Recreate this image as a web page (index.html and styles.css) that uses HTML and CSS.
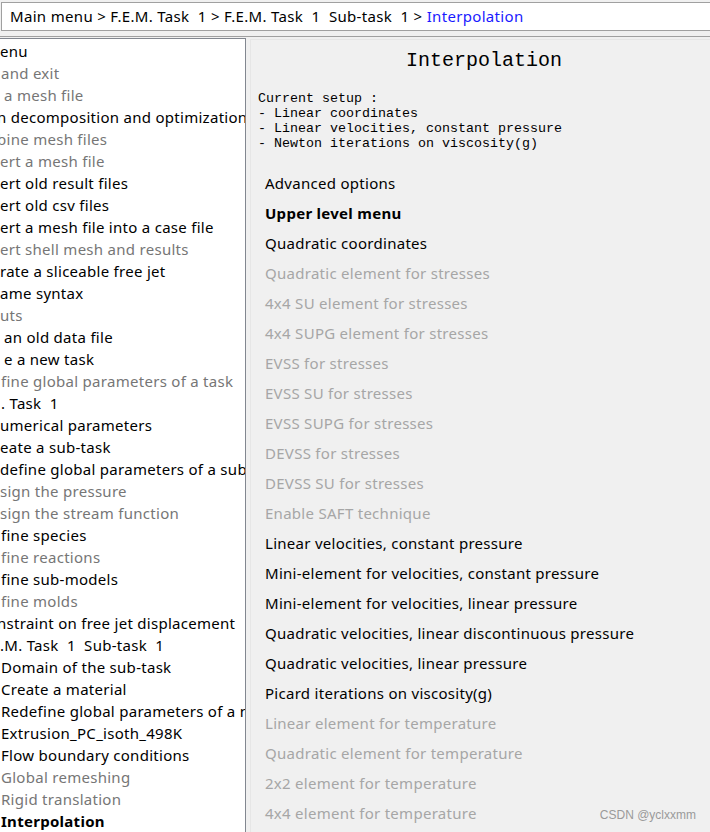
FILE: index.html
```html
<!DOCTYPE html>
<html>
<head>
<meta charset="utf-8">
<link rel="stylesheet" href="styles.css">
</head>
<body>
<div class="crumb">Main menu &gt; F.E.M. Task&nbsp;&nbsp;1 &gt; F.E.M. Task&nbsp;&nbsp;1&nbsp;&nbsp;Sub-task&nbsp;&nbsp;1 &gt; <span class="here">Interpolation</span></div>
<div class="sep"></div>
<div class="main">
  <div class="tree">
    <div class="row">enu</div>
    <div class="row off i1">and exit</div>
    <div class="row off i4">a mesh file</div>
    <div class="row cut">n decomposition and optimization</div>
    <div class="row off cut">bine mesh files</div>
    <div class="row off">ert a mesh file</div>
    <div class="row">ert old result files</div>
    <div class="row">ert old csv files</div>
    <div class="row">ert a mesh file into a case file</div>
    <div class="row off">ert shell mesh and results</div>
    <div class="row">rate a sliceable free jet</div>
    <div class="row">ame syntax</div>
    <div class="row off">uts</div>
    <div class="row i4">an old data file</div>
    <div class="row i4">e a new task</div>
    <div class="row off i1">fine global parameters of a task</div>
    <div class="row i1">. Task&nbsp;&nbsp;1</div>
    <div class="row">umerical parameters</div>
    <div class="row">eate a sub-task</div>
    <div class="row">define global parameters of a sub-task</div>
    <div class="row off">sign the pressure</div>
    <div class="row off">sign the stream function</div>
    <div class="row i1">fine species</div>
    <div class="row off i1">fine reactions</div>
    <div class="row i1">fine sub-models</div>
    <div class="row off i1">fine molds</div>
    <div class="row cut">nstraint on free jet displacement</div>
    <div class="row">.M. Task&nbsp;&nbsp;1&nbsp;&nbsp;Sub-task&nbsp;&nbsp;1</div>
    <div class="row i1">Domain of the sub-task</div>
    <div class="row i1">Create a material</div>
    <div class="row i1">Redefine global parameters of a material</div>
    <div class="row i1">Extrusion_PC_isoth_498K</div>
    <div class="row i1">Flow boundary conditions</div>
    <div class="row off i1">Global remeshing</div>
    <div class="row off i1">Rigid translation</div>
    <div class="row i1 cur">Interpolation</div>
  </div>
  <div class="panel">
    <div class="title">Interpolation</div>
    <pre class="setup">Current setup :
- Linear coordinates
- Linear velocities, constant pressure
- Newton iterations on viscosity(g)</pre>
    <div class="menu">
      <div class="item">Advanced options</div>
      <div class="item bold">Upper level menu</div>
      <div class="item">Quadratic coordinates</div>
      <div class="item dis">Quadratic element for stresses</div>
      <div class="item dis">4x4 SU element for stresses</div>
      <div class="item dis">4x4 SUPG element for stresses</div>
      <div class="item dis">EVSS for stresses</div>
      <div class="item dis">EVSS SU for stresses</div>
      <div class="item dis">EVSS SUPG for stresses</div>
      <div class="item dis">DEVSS for stresses</div>
      <div class="item dis">DEVSS SU for stresses</div>
      <div class="item dis">Enable SAFT technique</div>
      <div class="item">Linear velocities, constant pressure</div>
      <div class="item">Mini-element for velocities, constant pressure</div>
      <div class="item">Mini-element for velocities, linear pressure</div>
      <div class="item">Quadratic velocities, linear discontinuous pressure</div>
      <div class="item">Quadratic velocities, linear pressure</div>
      <div class="item">Picard iterations on viscosity(g)</div>
      <div class="item dis">Linear element for temperature</div>
      <div class="item dis">Quadratic element for temperature</div>
      <div class="item dis">2x2 element for temperature</div>
      <div class="item dis">4x4 element for temperature</div>
    </div>
    <div class="mark">CSDN @yclxxmm</div>
  </div>
</div>
</body>
</html>
```

FILE: styles.css
```css
html, body {
  margin: 0;
  padding: 0;
  height: 100%;
  overflow: hidden;
}
body {
  background: #f0f0f0;
  font-family: "Noto Sans", "Open Sans", sans-serif;
  font-size: 15px;
  letter-spacing: 0.28px;
  color: #000;
  display: flex;
  flex-direction: column;
}
.crumb {
  margin: 2px 0 0 1px;
  height: 27px;
  line-height: 27px;
  border: 1px solid #a0a0a0;
  border-right: none;
  background: #fff;
  padding-left: 8px;
  letter-spacing: 0.32px;
  white-space: nowrap;
  overflow: hidden;
}
.here { color: #1a1aff; }
.sep {
  margin-top: 5px;
  border-top: 1px solid #a0a0a0;
}
.main {
  flex: 1;
  display: flex;
  gap: 4px;
  margin-top: 1px;
  min-height: 0;
}
.tree {
  width: 245px;
  flex: none;
  background: #fff;
  border-top: 1px solid #828790;
  border-right: 1px solid #828790;
  padding-top: 1px;
  overflow: hidden;
}
.row {
  height: 22px;
  line-height: 22px;
  white-space: nowrap;
}
.row.off { color: #767676; }
.row.i1 { padding-left: 1px; }
.row.i4 { padding-left: 4px; }
.row.cut { margin-left: -3px; }
.row.cur { font-weight: bold; }
.panel {
  flex: 1;
  position: relative;
  margin-top: 1px;
  border-top: 1px solid #e6e6e6;
  border-left: 1px solid #e6e6e6;
  background: #f0f0f0;
  padding-left: 7px;
  overflow: hidden;
}
.title {
  font-family: "Liberation Mono", monospace;
  font-size: 20px;
  letter-spacing: 0;
  text-align: center;
  height: 38px;
  line-height: 38px;
  padding-top: 2px;
}
.setup {
  margin: 11px 0 0 0;
  font-family: "Liberation Mono", monospace;
  font-size: 13.33px;
  letter-spacing: 0;
  line-height: 15px;
}
.menu {
  margin-top: 17px;
  padding-left: 7px;
}
.item {
  height: 30px;
  line-height: 30px;
  white-space: nowrap;
}
.item.bold { font-weight: bold; }
.item.dis { color: #a6a6a6; }
.mark {
  position: absolute;
  right: 14px;
  bottom: 10px;
  font-family: "Liberation Sans", sans-serif;
  font-size: 12px;
  letter-spacing: 0;
  color: #9a9a9a;
}
```
